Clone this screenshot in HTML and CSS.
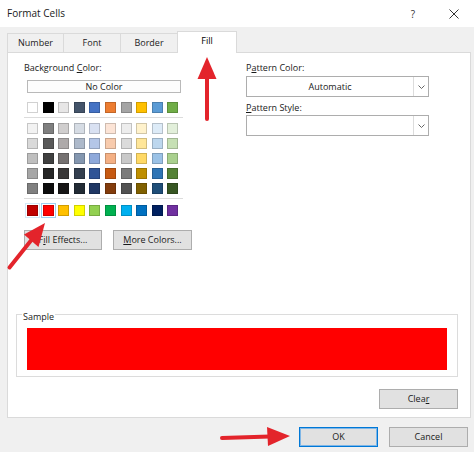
FILE: index.html
```html
<!DOCTYPE html>
<html lang="en">
<head>
<meta charset="utf-8">
<title>Format Cells</title>
<link rel="stylesheet" href="styles.css">
</head>
<body>
<div class="dialog">
  <div class="titlebar">
    <span class="title">Format Cells</span>
    <div class="title-actions">
      <span class="help">?</span>
      <svg class="close" width="10" height="10" viewBox="0 0 10 10"><path d="M0.5 0.5 L9.5 9.5 M9.5 0.5 L0.5 9.5" stroke="#333" stroke-width="1" fill="none"/></svg>
    </div>
  </div>
  <div class="tabs">
    <div class="tab tab-number">Number</div>
    <div class="tab tab-font">Font</div>
    <div class="tab tab-border">Border</div>
    <div class="tab tab-fill active">Fill</div>
  </div>
  <div class="panel">
    <div class="columns">
      <div class="left">
        <div class="label">Background <u>C</u>olor:</div>
        <div class="nocolor">No Color</div>
        <div class="swatches theme">
          <span class="sw" style="background:#FFFFFF"></span>
          <span class="sw" style="background:#000000"></span>
          <span class="sw" style="background:#E7E6E6"></span>
          <span class="sw" style="background:#44546A"></span>
          <span class="sw" style="background:#4472C4"></span>
          <span class="sw" style="background:#ED7D31"></span>
          <span class="sw" style="background:#A5A5A5"></span>
          <span class="sw" style="background:#FFC000"></span>
          <span class="sw" style="background:#5B9BD5"></span>
          <span class="sw" style="background:#70AD47"></span>
        </div>
        <div class="sep"></div>
        <div class="swatches tints">
          <span class="sw" style="background:#F2F2F2"></span>
          <span class="sw" style="background:#7F7F7F"></span>
          <span class="sw" style="background:#D0CECE"></span>
          <span class="sw" style="background:#D6DCE4"></span>
          <span class="sw" style="background:#D9E1F2"></span>
          <span class="sw" style="background:#FCE4D6"></span>
          <span class="sw" style="background:#EDEDED"></span>
          <span class="sw" style="background:#FFF2CC"></span>
          <span class="sw" style="background:#DDEBF7"></span>
          <span class="sw" style="background:#E2EFDA"></span>

          <span class="sw" style="background:#D9D9D9"></span>
          <span class="sw" style="background:#595959"></span>
          <span class="sw" style="background:#AEAAAA"></span>
          <span class="sw" style="background:#ADB9CA"></span>
          <span class="sw" style="background:#B4C6E7"></span>
          <span class="sw" style="background:#F8CBAD"></span>
          <span class="sw" style="background:#DBDBDB"></span>
          <span class="sw" style="background:#FFE699"></span>
          <span class="sw" style="background:#BDD7EE"></span>
          <span class="sw" style="background:#C6E0B4"></span>

          <span class="sw" style="background:#BFBFBF"></span>
          <span class="sw" style="background:#404040"></span>
          <span class="sw" style="background:#757171"></span>
          <span class="sw" style="background:#8497B0"></span>
          <span class="sw" style="background:#8EA9DB"></span>
          <span class="sw" style="background:#F4B084"></span>
          <span class="sw" style="background:#C9C9C9"></span>
          <span class="sw" style="background:#FFD966"></span>
          <span class="sw" style="background:#9BC2E6"></span>
          <span class="sw" style="background:#A9D08E"></span>

          <span class="sw" style="background:#A6A6A6"></span>
          <span class="sw" style="background:#262626"></span>
          <span class="sw" style="background:#3A3838"></span>
          <span class="sw" style="background:#333F4F"></span>
          <span class="sw" style="background:#305496"></span>
          <span class="sw" style="background:#C65911"></span>
          <span class="sw" style="background:#7B7B7B"></span>
          <span class="sw" style="background:#BF8F00"></span>
          <span class="sw" style="background:#2F75B5"></span>
          <span class="sw" style="background:#548235"></span>

          <span class="sw" style="background:#808080"></span>
          <span class="sw" style="background:#0D0D0D"></span>
          <span class="sw" style="background:#171616"></span>
          <span class="sw" style="background:#222B35"></span>
          <span class="sw" style="background:#203764"></span>
          <span class="sw" style="background:#833C0C"></span>
          <span class="sw" style="background:#525252"></span>
          <span class="sw" style="background:#806000"></span>
          <span class="sw" style="background:#1F4E78"></span>
          <span class="sw" style="background:#375623"></span>
        </div>
        <div class="sep"></div>
        <div class="swatches standard">
          <span class="sw hover" style="background:#C00000"></span>
          <span class="sw selected" style="background:#FF0000"></span>
          <span class="sw" style="background:#FFC000"></span>
          <span class="sw" style="background:#FFFF00"></span>
          <span class="sw" style="background:#92D050"></span>
          <span class="sw" style="background:#00B050"></span>
          <span class="sw" style="background:#00B0F0"></span>
          <span class="sw" style="background:#0070C0"></span>
          <span class="sw" style="background:#002060"></span>
          <span class="sw" style="background:#7030A0"></span>
        </div>
        <div class="btn-row">
          <button class="btn">F<u>i</u>ll Effects...</button>
          <button class="btn"><u>M</u>ore Colors...</button>
        </div>
      </div>
      <div class="right">
        <div class="label">P<u>a</u>ttern Color:</div>
        <div class="select">
          <span class="select-value">Automatic</span>
          <span class="select-btn"><svg width="7" height="4" viewBox="0 0 7 4"><path d="M0.5 0.5 L3.5 3.5 L6.5 0.5" stroke="#555" stroke-width="0.9" fill="none"/></svg></span>
        </div>
        <div class="label label-second"><u>P</u>attern Style:</div>
        <div class="select select-second">
          <span class="select-value"></span>
          <span class="select-btn"><svg width="7" height="4" viewBox="0 0 7 4"><path d="M0.5 0.5 L3.5 3.5 L6.5 0.5" stroke="#555" stroke-width="0.9" fill="none"/></svg></span>
        </div>
      </div>
    </div>
    <div class="sample">
      <div class="sample-label">Sample</div>
      <div class="sample-fill"></div>
    </div>
    <div class="clear-row">
      <button class="btn">Clea<u>r</u></button>
    </div>
  </div>
  <div class="footer">
    <button class="btn btn-default">OK</button>
    <button class="btn">Cancel</button>
  </div>
  <div class="bottom-strip"></div>
  <svg class="arrows" width="474" height="454" viewBox="0 0 474 454">
    <g fill="#e3242b" stroke="#e3242b" stroke-linecap="round">
      <line x1="207" y1="77" x2="207" y2="119" stroke-width="4"/>
      <polygon points="207,57 197.5,79 216.5,79" stroke="none"/>
      <line x1="9.5" y1="267.5" x2="33" y2="238" stroke-width="4"/>
      <polygon points="45,223 24,234.5 38.5,247" stroke="none"/>
      <line x1="222" y1="438" x2="270" y2="436.5" stroke-width="4"/>
      <polygon points="290,436 267,427 268,446" stroke="none"/>
    </g>
  </svg>
</div>
</body>
</html>
```

FILE: styles.css
```css
* { box-sizing: border-box; }

html, body {
  margin: 0;
  padding: 0;
}

body {
  width: 474px;
  height: 454px;
  overflow: hidden;
  font-family: "Open Sans", "Noto Sans", sans-serif;
  font-size: 9px;
  color: #1a1a1a;
}

.dialog {
  position: relative;
  width: 474px;
  height: 454px;
  background: #f0f0f0;
  display: flex;
  flex-direction: column;
}

u { text-decoration: underline; text-underline-offset: 1px; }

/* Title bar */
.titlebar {
  height: 27px;
  flex: none;
  background: #ffffff;
  display: flex;
  align-items: center;
  justify-content: space-between;
  padding-left: 7px;
}

.title {
  font-size: 10px;
  color: #1a1a1a;
  line-height: 13px;
}

.title-actions {
  display: flex;
  align-items: center;
  height: 27px;
}

.help {
  font-size: 10px;
  color: #333;
  width: 10px;
  text-align: center;
  margin-right: 31px;
}

.close {
  display: block;
  margin-right: 15px;
}

/* Tabs */
.tabs {
  height: 25px;
  flex: none;
  display: flex;
  align-items: flex-end;
  padding-left: 7px;
}

.tab {
  height: 19px;
  border: 1px solid #dadada;
  border-bottom: none;
  margin-right: -1px;
  background: #f0f0f0;
  display: flex;
  align-items: center;
  justify-content: center;
  line-height: 12px;
  color: #222;
}

.tab-number { width: 57px; }
.tab-font { width: 58px; }
.tab-border { width: 58px; }
.tab-fill { width: 60px; }

.tab.active {
  height: 22px;
  background: #ffffff;
  margin-bottom: -1px;
  position: relative;
  z-index: 1;
  padding-bottom: 3px;
  color: #000;
}

/* Panel */
.panel {
  flex: none;
  margin-left: 7px;
  width: 464px;
  height: 366px;
  background: #ffffff;
  border: 1px solid #dadada;
}

.columns {
  display: grid;
  grid-template-columns: 222px 183px;
  padding: 8px 0 0 16px;
}

.label {
  height: 13px;
  line-height: 13px;
  white-space: nowrap;
}

.nocolor {
  margin: 6px 0 0 3px;
  width: 154px;
  height: 13px;
  border: 1px solid #b9b9b9;
  background: #fdfdfd;
  text-align: center;
  line-height: 11px;
}

.swatches {
  display: grid;
  grid-template-columns: repeat(10, 11px);
  column-gap: 4.55px;
  row-gap: 4px;
  margin-left: 3.3px;
}

.theme { margin-top: 9px; }
.tints { margin-top: 5px; }
.standard { margin-top: 6px; }

.sw {
  display: block;
  width: 11px;
  height: 11px;
  box-shadow: inset 0 0 0 1px rgba(0, 0, 0, 0.18);
}

.sw.hover {
  outline: 1px solid #d3e9f8;
  outline-offset: 1px;
}

.sw.selected {
  outline: 1px solid #9fd0f2;
  outline-offset: 1.5px;
}

.sep {
  width: 159px;
  height: 1px;
  background: #dcdcdc;
  margin-top: 4px;
}

.btn-row {
  display: flex;
  gap: 11px;
  margin-top: 14px;
}

.btn {
  width: 79px;
  height: 20px;
  padding: 0;
  margin: 0;
  border: 1px solid #adadad;
  background: #e1e1e1;
  font-family: "Open Sans", "Noto Sans", sans-serif;
  font-size: 9px;
  color: #1a1a1a;
  line-height: 12px;
  text-align: center;
}

.btn-row .btn:first-child { width: 78px; }

.btn-default {
  border: 1px solid #0078d7;
  box-shadow: inset 0 0 0 1px #7fb6e6;
}

/* Right column */
.select {
  margin-top: 2px;
  width: 183px;
  height: 21px;
  border: 1px solid #adadad;
  background: #ffffff;
  display: flex;
}

.select-second { margin-top: 1px; }
.label-second { margin-top: 4px; }

.select-value {
  flex: 1;
  display: flex;
  align-items: center;
  justify-content: center;
  line-height: 12px;
}

.select-btn {
  width: 15px;
  border-left: 1px solid #dcdcdc;
  display: flex;
  align-items: center;
  justify-content: center;
}

.select-btn svg { display: block; }

/* Sample */
.sample {
  margin: 64px 0 0 8px;
  width: 442px;
  height: 63px;
  border: 1px solid #dcdcdc;
  padding: 0 10px;
}

.sample-label {
  width: fit-content;
  margin: -5.5px 0 0 -5px;
  padding: 0 1px;
  height: 13px;
  line-height: 13px;
  background: #ffffff;
}

.sample-fill {
  margin-top: 5.5px;
  height: 42px;
  background: #ff0000;
}

.clear-row {
  margin: 12px 0 0 8px;
  width: 442px;
  display: flex;
  justify-content: flex-end;
}

/* Footer */
.footer {
  flex: none;
  height: 34px;
  padding: 9px 6px 0 0;
  display: flex;
  justify-content: flex-end;
  gap: 11px;
}

.bottom-strip {
  flex: none;
  height: 2px;
  background: #ffffff;
}

.arrows {
  position: absolute;
  left: 0;
  top: 0;
  pointer-events: none;
}
```
